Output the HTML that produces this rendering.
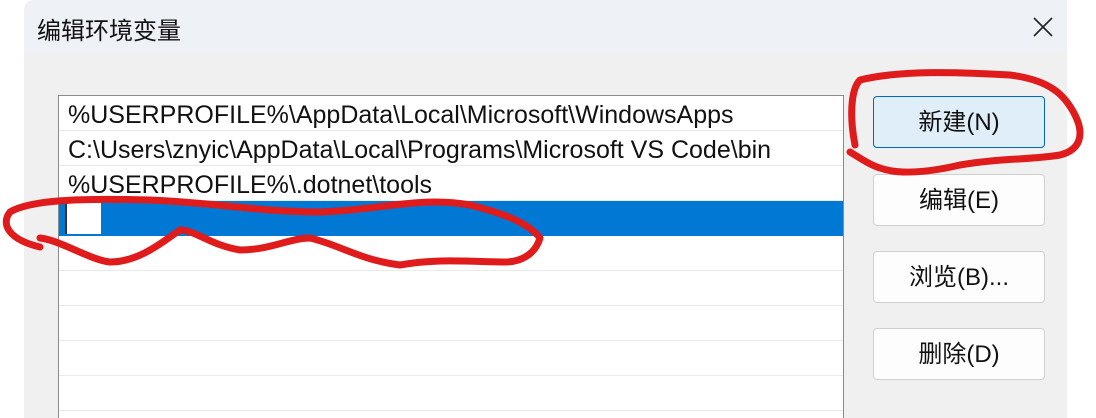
<!DOCTYPE html>
<html><head><meta charset="utf-8"><style>
html,body{margin:0;width:1096px;height:418px;overflow:hidden;}
body{background:#fff;position:relative;font-family:"Liberation Sans","Noto Sans CJK SC",sans-serif;}
.dlg{position:absolute;left:24px;top:0;width:1043px;height:418px;background:#f0f0f0;border-top-left-radius:10px;}
.title{position:absolute;left:0;top:0;width:100%;height:52px;background:#eef1f5;border-top-left-radius:10px;}
.title span{position:absolute;left:13px;top:11px;font-size:24px;color:#111;}
.list{position:absolute;left:58px;top:95px;width:784px;height:330px;background:#fff;border:1px solid #8a8a8a;overflow:hidden;}
.row{position:absolute;left:0;width:784px;height:34px;border-bottom:1px solid #eaeaea;font-size:25px;color:#111;line-height:38px;white-space:nowrap;}
.row span{padding-left:9px;}
.sel{background:#0078d4;}
.btn{position:absolute;left:873px;width:170px;height:50px;background:#fdfdfd;border:1px solid #d0d0d0;border-radius:4px;font-size:24px;text-align:center;line-height:52px;color:#111;}
</style></head><body>
<div class="dlg"><div class="title"><span>编辑环境变量</span></div></div>
<svg style="position:absolute;left:1032px;top:16px" width="22" height="22"><path d="M2 2L20 20M20 2L2 20" stroke="#222" stroke-width="1.6"/></svg>
<div class="list">
<div class="row" style="top:0"><span>%USERPROFILE%\AppData\Local\Microsoft\WindowsApps</span></div>
<div class="row" style="top:35px"><span>C:\Users\znyic\AppData\Local\Programs\Microsoft VS Code\bin</span></div>
<div class="row" style="top:70px"><span>%USERPROFILE%\.dotnet\tools</span></div>
<div class="row sel" style="top:105px;height:35px;border:none"><div style="position:absolute;left:6px;top:1px;width:34px;height:32px;background:#fff;border-left:2px solid #333"></div></div>
<div class="row" style="top:140px"></div>
<div class="row" style="top:175px"></div>
<div class="row" style="top:210px"></div>
<div class="row" style="top:245px"></div>
<div class="row" style="top:280px"></div>
</div>
<div class="btn" style="top:96px;background:#e0eef9;border-color:#0067c0">新建(N)</div>
<div class="btn" style="top:174px">编辑(E)</div>
<div class="btn" style="top:251px">浏览(B)...</div>
<div class="btn" style="top:328px">删除(D)</div>
<svg style="position:absolute;left:0;top:0" width="1096" height="418" fill="none" stroke="#e01b1b" stroke-width="7" stroke-linecap="round" stroke-linejoin="round">
<path d="M40 247C10 240 0 225 10 212C30 200 80 198 150 200C220 203 260 212 320 212C380 210 420 196 470 205C510 215 530 225 540 238C535 255 520 262 505 262C470 262 440 258 400 265C360 260 340 245 310 238C290 238 270 250 240 250C210 245 195 230 180 230C165 240 140 262 110 262C90 260 60 240 40 238"/>
<path d="M855 145C850 120 850 90 860 80C900 70 960 72 1010 75C1050 80 1065 95 1075 115C1085 135 1080 150 1060 155C1030 160 1000 158 960 165C930 172 900 175 880 168C870 165 860 158 850 152"/>
</svg>
</body></html>
